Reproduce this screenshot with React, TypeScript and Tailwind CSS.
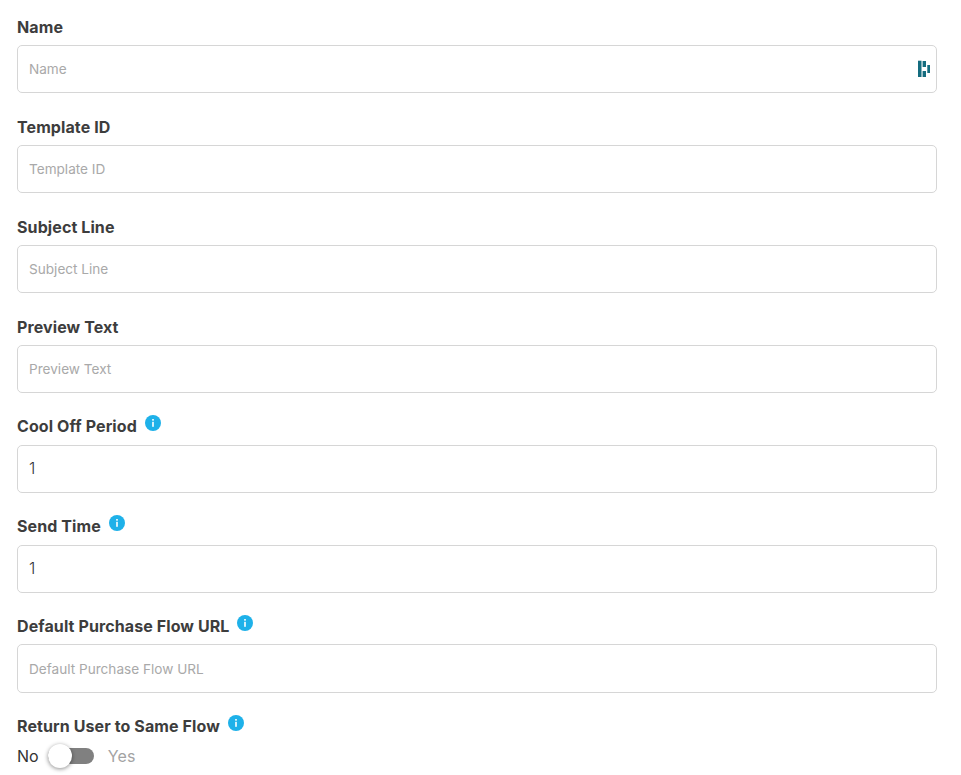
const fieldFont = { fontFamily: "Inter, 'Liberation Sans', sans-serif" };

const Info = () => (
  <span className="ml-2 -mt-[6px] flex h-4 w-4 items-center justify-center rounded-full bg-[#1eb1e9]">
    <svg width="16" height="16" viewBox="0 0 16 16">
      <rect x="7.2" y="4" width="1.6" height="1.7" fill="#fff" />
      <rect x="7.2" y="6.8" width="1.6" height="5" fill="#fff" />
    </svg>
  </span>
);

const Logo = () => (
  <svg width="13" height="18" viewBox="0 0 13 18" className="absolute right-[6px] top-[15px]">
    <rect x="0" y="0.7" width="3.5" height="16.3" fill="#146c7f" />
    <rect x="4.6" y="1" width="3.4" height="6" fill="#146c7f" />
    <rect x="4.6" y="11" width="3.4" height="6" fill="#146c7f" />
    <rect x="9.3" y="5" width="2.7" height="8" fill="#146c7f" />
  </svg>
);

type FieldProps = {
  label: string;
  placeholder?: string;
  value?: string;
  info?: boolean;
  logo?: boolean;
  tall?: boolean;
};

const Field = ({ label, placeholder, value, info, logo, tall }: FieldProps) => (
  <div className="flex flex-col">
    <label
      className={
        (info ? "pb-[2px] " : "") +
        (tall ? "mb-[7px] " : "mb-2 ") +
        "flex h-5 items-center text-[16px] font-bold tracking-[0.1px] text-[#3d3d3d]"
      }
    >
      {label}
      {info && <Info />}
    </label>
    <div className="relative">
      <input
        readOnly
        defaultValue={value}
        placeholder={placeholder}
        style={fieldFont}
        className={
          (tall ? "h-[49px] " : "h-12 ") +
          "w-full rounded-[5px] border border-[#d6d6d6] bg-white px-[11px] pb-[2px] text-[16px] font-light text-[#333] outline-none placeholder:text-[13.6px] placeholder:font-normal placeholder:text-[#a9a9a9]"
        }
      />
      {logo && <Logo />}
    </div>
  </div>
);

export default function App() {
  return (
    <div style={fieldFont} className="h-[775px] w-[961px] overflow-hidden bg-white pl-[17px] pt-[17px]">
      <div className="flex w-[920px] flex-col gap-6">
        <Field label="Name" placeholder="Name" logo />
        <Field label="Template ID" placeholder="Template ID" />
        <Field label="Subject Line" placeholder="Subject Line" />
        <Field label="Preview Text" placeholder="Preview Text" />
        <Field label="Cool Off Period" value="1" info />
        <Field label="Send Time" value="1" info />
        <Field label="Default Purchase Flow URL" placeholder="Default Purchase Flow URL" info tall />
        <div className="flex flex-col">
          <label className="flex h-5 items-center pb-[2px] text-[16px] font-bold tracking-[0.1px] text-[#3d3d3d]">
            Return User to Same Flow
            <Info />
          </label>
          <div className="mt-[7px] flex items-center text-[16px]">
            <span className="text-[#333]">No</span>
            <div className="relative ml-[9px] h-4 w-[46px] rounded-full bg-[#808080]">
              <span className="absolute -top-1 left-0 h-6 w-6 rounded-full bg-white shadow-[0_1px_4px_rgba(0,0,0,0.45)]" />
            </div>
            <span className="ml-[14px] tracking-[0.2px] text-[#a3a3a3]">Yes</span>
          </div>
        </div>
      </div>
    </div>
  );
}
